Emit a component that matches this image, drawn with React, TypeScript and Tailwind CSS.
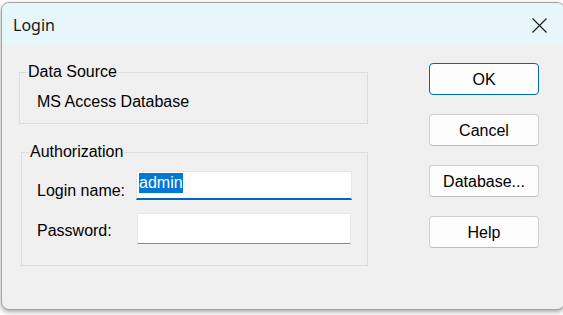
import React from "react";

const ui = { fontFamily: '"Liberation Sans", Arial, sans-serif' };
const title = { fontFamily: '"Segoe UI", "Noto Sans", "Open Sans", sans-serif' };

const buttons = ["OK", "Cancel", "Database...", "Help"];

export default function App() {
  return (
    <div className="w-[563px] h-[315px] bg-white overflow-hidden pt-[2px] pl-[1px]">
      <div className="w-[564px] h-[308px] rounded-[8px] border border-[#a3a3a3] bg-[#f0f0f0] overflow-hidden shadow-[0_2px_5px_rgba(0,0,0,0.35)]">
        {/* Title bar */}
        <div className="h-[43px] bg-[#e6f6fa] flex items-center justify-between pl-[11px] pr-[17px]">
          <span className="text-[16px] text-[#1a1a1a] leading-[20px]" style={title}>
            Login
          </span>
          <svg width="15" height="15" viewBox="0 0 15 15" className="mt-[1px]">
            <path d="M0.5 0.5 L14.5 14.5 M14.5 0.5 L0.5 14.5" stroke="#1a1a1a" strokeWidth="1.1" />
          </svg>
        </div>

        {/* Body */}
        <div className="flex pl-[17px] pt-[17px] text-[16px] leading-[18px] text-black" style={ui}>
          <div className="w-[349px] flex flex-col">
            {/* Data Source */}
            <fieldset className="border border-[#dcdcdc] pl-[17px] pt-[12px] pb-[12px]">
              <legend className="-ml-[10px] px-[1px]">Data Source</legend>
              <div>MS Access Database</div>
            </fieldset>

            {/* Authorization */}
            <fieldset className="mt-[19px] ml-[2px] border border-[#dcdcdc] pl-[15px] pt-[10px] pb-[21px]">
              <legend className="-ml-[8px] px-[1px]">Authorization</legend>
              <div className="flex items-start">
                <span className="w-[99px] pt-[11px]">Login name:</span>
                <div className="w-[216px] h-[29px] bg-white border border-[#e6e6e6] border-b-2 border-b-[#0067c0] pl-[2px] pt-[1px]">
                  <span className="inline-block bg-[#0078d7] text-white leading-[20px]">admin</span>
                </div>
              </div>
              <div className="flex items-start mt-[13px]">
                <span className="w-[100px] pt-[9px]">Password:</span>
                <div className="w-[214px] h-[31px] bg-white border border-[#e6e6e6] border-b-[#8a8a8a]" />
              </div>
            </fieldset>
          </div>

          {/* Buttons */}
          <div className="ml-[61px] flex flex-col gap-[19px]">
            {buttons.map((b, i) => (
              <div
                key={b}
                className={`w-[110px] h-[32px] pt-[2px] rounded-[4px] bg-[#fdfdfd] flex items-center justify-center ${
                  i === 0
                    ? "border-[1.5px] border-[#0067c0]"
                    : "border border-[#d0d0d0] border-b-[#bdbdbd]"
                }`}
              >
                {b}
              </div>
            ))}
          </div>
        </div>
      </div>
    </div>
  );
}
